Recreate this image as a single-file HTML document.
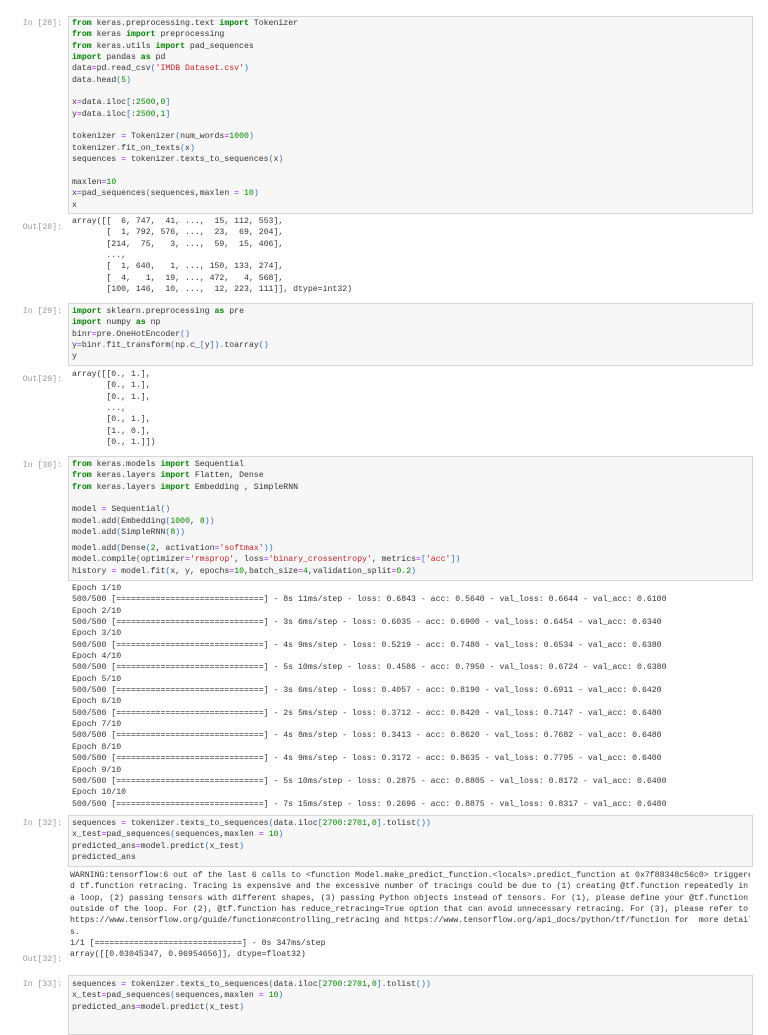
<!DOCTYPE html>
<html><head><meta charset="utf-8"><style>
body{margin:0;width:768px;height:1024px;background:#fff;position:relative;overflow:hidden;font-family:"Liberation Mono",monospace;}
.box{position:absolute;left:68px;width:685px;background:#f7f7f7;border:1px solid #d6d6d6;box-sizing:border-box;}
pre{position:absolute;left:72px;margin:0;font-family:"Liberation Mono","DejaVu Sans Mono",monospace;font-size:8.2px;line-height:11.35px;color:#333;white-space:pre;overflow:hidden;width:680px;}
.p{position:absolute;right:706px;font-family:"Liberation Mono",monospace;font-size:8.2px;color:#999;}
.k{color:#008000;font-weight:bold}
.s{color:#ba2121}
.n{color:#080}
.o{color:#a2f}
.b{color:#3070c0}
</style></head><body>

<div class="box" style="top:16px;height:198px"></div>
<div class="p" style="top:19px">In [28]:</div>
<pre style="top:18px"><span class="k">from</span> keras.preprocessing.text <span class="k">import</span> Tokenizer
<span class="k">from</span> keras <span class="k">import</span> preprocessing
<span class="k">from</span> keras.utils <span class="k">import</span> pad_sequences
<span class="k">import</span> pandas <span class="k">as</span> pd
data<span class="o">=</span>pd<span class="o">.</span>read_csv<span class="b">(</span><span class="s">'IMDB Dataset.csv'</span><span class="b">)</span>
data<span class="o">.</span>head<span class="b">(</span><span class="n">5</span><span class="b">)</span>

x<span class="o">=</span>data<span class="o">.</span>iloc<span class="b">[</span>:<span class="n">2500</span>,<span class="n">0</span><span class="b">]</span>
y<span class="o">=</span>data<span class="o">.</span>iloc<span class="b">[</span>:<span class="n">2500</span>,<span class="n">1</span><span class="b">]</span>

tokenizer <span class="o">=</span> Tokenizer<span class="b">(</span>num_words<span class="o">=</span><span class="n">1000</span><span class="b">)</span>
tokenizer<span class="o">.</span>fit_on_texts<span class="b">(</span>x<span class="b">)</span>
sequences <span class="o">=</span> tokenizer<span class="o">.</span>texts_to_sequences<span class="b">(</span>x<span class="b">)</span>

maxlen<span class="o">=</span><span class="n">10</span>
x<span class="o">=</span>pad_sequences<span class="b">(</span>sequences,maxlen <span class="o">=</span> <span class="n">10</span><span class="b">)</span>
x</pre>

<div class="p" style="top:223px">Out[28]:</div>
<pre style="top:216px">array([[  6, 747,  41, ...,  15, 112, 553],
       [  1, 792, 576, ...,  23,  69, 204],
       [214,  75,   3, ...,  59,  15, 406],
       ...,
       [  1, 640,   1, ..., 150, 133, 274],
       [  4,   1,  19, ..., 472,   4, 568],
       [100, 146,  10, ...,  12, 223, 111]], dtype=int32)</pre>

<div class="box" style="top:303px;height:63px"></div>
<div class="p" style="top:307px">In [29]:</div>
<pre style="top:306px"><span class="k">import</span> sklearn.preprocessing <span class="k">as</span> pre
<span class="k">import</span> numpy <span class="k">as</span> np
binr<span class="o">=</span>pre<span class="o">.</span>OneHotEncoder<span class="b">()</span>
y<span class="o">=</span>binr<span class="o">.</span>fit_transform<span class="b">(</span>np<span class="o">.</span>c_<span class="b">[</span>y<span class="b">]).</span>toarray<span class="b">()</span>
y</pre>

<div class="p" style="top:375px">Out[29]:</div>
<pre style="top:369px">array([[0., 1.],
       [0., 1.],
       [0., 1.],
       ...,
       [0., 1.],
       [1., 0.],
       [0., 1.]])</pre>

<div class="box" style="top:456px;height:125px"></div>
<div class="p" style="top:461px">In [30]:</div>
<pre style="top:459px"><span class="k">from</span> keras.models <span class="k">import</span> Sequential
<span class="k">from</span> keras.layers <span class="k">import</span> Flatten, Dense
<span class="k">from</span> keras.layers <span class="k">import</span> Embedding , SimpleRNN

model <span class="o">=</span> Sequential<span class="b">()</span>
model<span class="o">.</span>add<span class="b">(</span>Embedding<span class="b">(</span><span class="n">1000</span>, <span class="n">8</span><span class="b">))</span>
model<span class="o">.</span>add<span class="b">(</span>SimpleRNN<span class="b">(</span><span class="n">8</span><span class="b">))</span></pre>
<pre style="top:543px">model<span class="o">.</span>add<span class="b">(</span>Dense<span class="b">(</span><span class="n">2</span>, activation<span class="o">=</span><span class="s">'softmax'</span><span class="b">))</span>
model<span class="o">.</span>compile<span class="b">(</span>optimizer<span class="o">=</span><span class="s">'rmsprop'</span>, loss<span class="o">=</span><span class="s">'binary_crossentropy'</span>, metrics<span class="o">=</span><span class="b">[</span><span class="s">'acc'</span><span class="b">])</span>
history <span class="o">=</span> model<span class="o">.</span>fit<span class="b">(</span>x, y, epochs<span class="o">=</span><span class="n">10</span>,batch_size<span class="o">=</span><span class="n">4</span>,validation_split<span class="o">=</span><span class="n">0.2</span><span class="b">)</span></pre>

<pre style="top:583px">Epoch 1/10
500/500 [==============================] - 8s 11ms/step - loss: 0.6843 - acc: 0.5640 - val_loss: 0.6644 - val_acc: 0.6100
Epoch 2/10
500/500 [==============================] - 3s 6ms/step - loss: 0.6035 - acc: 0.6900 - val_loss: 0.6454 - val_acc: 0.6340
Epoch 3/10
500/500 [==============================] - 4s 9ms/step - loss: 0.5219 - acc: 0.7480 - val_loss: 0.6534 - val_acc: 0.6380
Epoch 4/10
500/500 [==============================] - 5s 10ms/step - loss: 0.4586 - acc: 0.7950 - val_loss: 0.6724 - val_acc: 0.6380
Epoch 5/10
500/500 [==============================] - 3s 6ms/step - loss: 0.4057 - acc: 0.8190 - val_loss: 0.6911 - val_acc: 0.6420
Epoch 6/10
500/500 [==============================] - 2s 5ms/step - loss: 0.3712 - acc: 0.8420 - val_loss: 0.7147 - val_acc: 0.6480
Epoch 7/10
500/500 [==============================] - 4s 8ms/step - loss: 0.3413 - acc: 0.8620 - val_loss: 0.7682 - val_acc: 0.6480
Epoch 8/10
500/500 [==============================] - 4s 9ms/step - loss: 0.3172 - acc: 0.8635 - val_loss: 0.7795 - val_acc: 0.6400
Epoch 9/10
500/500 [==============================] - 5s 10ms/step - loss: 0.2875 - acc: 0.8805 - val_loss: 0.8172 - val_acc: 0.6400
Epoch 10/10
500/500 [==============================] - 7s 15ms/step - loss: 0.2696 - acc: 0.8875 - val_loss: 0.8317 - val_acc: 0.6480</pre>

<div class="box" style="top:815px;height:52px"></div>
<div class="p" style="top:819px">In [32]:</div>
<pre style="top:818px">sequences <span class="o">=</span> tokenizer<span class="o">.</span>texts_to_sequences<span class="b">(</span>data<span class="o">.</span>iloc<span class="b">[</span><span class="n">2700</span>:<span class="n">2701</span>,<span class="n">0</span><span class="b">].</span>tolist<span class="b">())</span>
x_test<span class="o">=</span>pad_sequences<span class="b">(</span>sequences,maxlen <span class="o">=</span> <span class="n">10</span><span class="b">)</span>
predicted_ans<span class="o">=</span>model<span class="o">.</span>predict<span class="b">(</span>x_test<span class="b">)</span>
predicted_ans</pre>

<pre style="top:870px;left:70px">WARNING:tensorflow:6 out of the last 6 calls to &lt;function Model.make_predict_function.&lt;locals&gt;.predict_function at 0x7f88348c56c0&gt; triggere
d tf.function retracing. Tracing is expensive and the excessive number of tracings could be due to (1) creating @tf.function repeatedly in
a loop, (2) passing tensors with different shapes, (3) passing Python objects instead of tensors. For (1), please define your @tf.function
outside of the loop. For (2), @tf.function has reduce_retracing=True option that can avoid unnecessary retracing. For (3), please refer to
https://www.tensorflow.org/guide/function#controlling_retracing and https://www.tensorflow.org/api_docs/python/tf/function for  more detail
s.
1/1 [==============================] - 0s 347ms/step
array([[0.03045347, 0.96954656]], dtype=float32)</pre>
<div class="p" style="top:955px">Out[32]:</div>

<div class="box" style="top:975px;height:60px"></div>
<div class="p" style="top:980px">In [33]:</div>
<pre style="top:979px">sequences <span class="o">=</span> tokenizer<span class="o">.</span>texts_to_sequences<span class="b">(</span>data<span class="o">.</span>iloc<span class="b">[</span><span class="n">2700</span>:<span class="n">2701</span>,<span class="n">0</span><span class="b">].</span>tolist<span class="b">())</span>
x_test<span class="o">=</span>pad_sequences<span class="b">(</span>sequences,maxlen <span class="o">=</span> <span class="n">10</span><span class="b">)</span>
predicted_ans<span class="o">=</span>model<span class="o">.</span>predict<span class="b">(</span>x_test<span class="b">)</span></pre>

</body></html>
